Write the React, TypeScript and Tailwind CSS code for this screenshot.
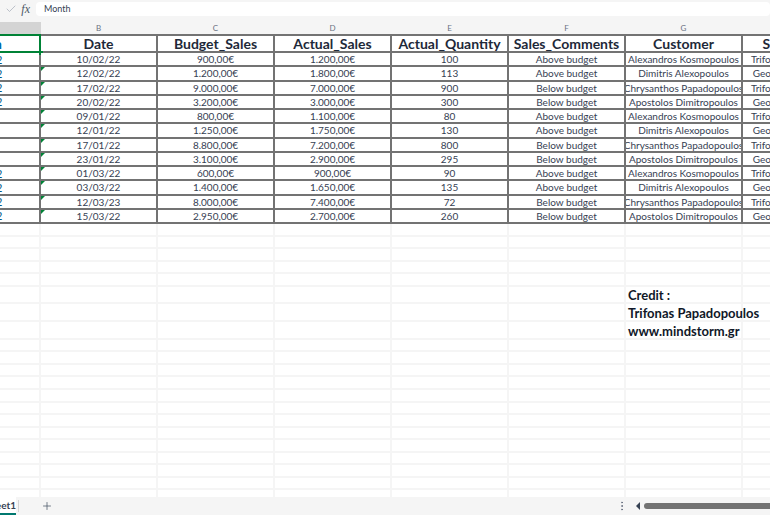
import { Check, MoreVertical, Plus } from "lucide-react";

const font = { fontFamily: "Lato, 'Open Sans', sans-serif" };

const customers = ["Alexandros Kosmopoulos", "Dimitris Alexopoulos", "Chrysanthos Papadopoulos", "Apostolos Dimitropoulos"];
const managers = ["Trifonas Papadopoulos", "Georgios Alexopoulos"];

const rows = [
  { a: "2", date: "10/02/22", budget: "900,00€", actual: "1.200,00€", qty: "100", note: "Above budget" },
  { a: "2", date: "12/02/22", budget: "1.200,00€", actual: "1.800,00€", qty: "113", note: "Above budget" },
  { a: "2", date: "17/02/22", budget: "9.000,00€", actual: "7.000,00€", qty: "900", note: "Below budget" },
  { a: "2", date: "20/02/22", budget: "3.200,00€", actual: "3.000,00€", qty: "300", note: "Below budget" },
  { a: "", date: "09/01/22", budget: "800,00€", actual: "1.100,00€", qty: "80", note: "Above budget" },
  { a: "", date: "12/01/22", budget: "1.250,00€", actual: "1.750,00€", qty: "130", note: "Above budget" },
  { a: "", date: "17/01/22", budget: "8.800,00€", actual: "7.200,00€", qty: "800", note: "Below budget" },
  { a: "", date: "23/01/22", budget: "3.100,00€", actual: "2.900,00€", qty: "295", note: "Below budget" },
  { a: "2", date: "01/03/22", budget: "600,00€", actual: "900,00€", qty: "90", note: "Above budget" },
  { a: "2", date: "03/03/22", budget: "1.400,00€", actual: "1.650,00€", qty: "135", note: "Above budget" },
  { a: "2", date: "12/03/23", budget: "8.000,00€", actual: "7.400,00€", qty: "72", note: "Below budget" },
  { a: "2", date: "15/03/22", budget: "2.950,00€", actual: "2.700,00€", qty: "260", note: "Below budget" },
];

const headers = ["Date", "Budget_Sales", "Actual_Sales", "Actual_Quantity", "Sales_Comments", "Customer", "Sales_Agent"];
const letters = ["B", "C", "D", "E", "F", "G", "H"];
const cols = "grid grid-cols-[39px_repeat(7,115px)] gap-x-0.5";

function Cell({ children }: { children?: React.ReactNode }) {
  return (
    <div className="flex items-center justify-center overflow-hidden whitespace-nowrap bg-white text-[10px] leading-none text-gray-700">
      {children}
    </div>
  );
}

// blank sheet rows under the table, the credit sits in column G
const blanks = [
  ...Array(5).fill({ size: "flex-1" }),
  { size: "flex-[1.5]", credit: "Credit :" },
  { size: "flex-[1.5]", credit: "Trifonas Papadopoulos" },
  { size: "flex-[1.5]", credit: "www.mindstorm.gr" },
  ...Array(12).fill({ size: "flex-1" }),
  { size: "flex-[0.65]", last: true },
];

export default function App() {
  return (
    <div className="flex h-screen w-full flex-col overflow-hidden bg-white" style={font}>
      {/* formula bar */}
      <div className="flex h-[22px] items-start gap-1 bg-neutral-100 pt-0.5">
        <div className="flex h-3.5 w-8 items-center justify-end gap-1 pr-0.5">
          <Check className="size-3 text-gray-400" strokeWidth={1.25} />
          <span className="text-xs leading-none text-gray-600 italic" style={{ fontFamily: "'Liberation Serif', serif" }}>
            fx
          </span>
        </div>
        <div className="flex h-3.5 flex-1 items-center rounded-sm bg-white pl-2 text-[9px] text-gray-700">Month</div>
      </div>

      {/* column letters */}
      <div className={`${cols} h-3 bg-neutral-100 text-[8px] leading-none text-gray-500`}>
        <div className="-mr-0.5 bg-neutral-300" />
        {letters.map((l) => (
          <div key={l} className="flex items-center justify-center">
            {l}
          </div>
        ))}
      </div>

      {/* table */}
      <div className={`${cols} h-[190px] shrink-0 grid-rows-[15px_repeat(12,1fr)] gap-y-0.5 bg-neutral-500 py-0.5`}>
        <div className="relative flex items-center overflow-visible bg-white text-sm font-bold text-sky-700">
          <span className="-ml-1.5">h</span>
          <div className="absolute -top-0.5 -right-0.5 -bottom-0.5 left-0 border-y-2 border-r-2 border-green-700" />
          <div className="absolute -right-1 -bottom-1 size-1 bg-green-700" />
        </div>
        {headers.map((h) => (
          <div key={h} className="flex items-center justify-center overflow-hidden whitespace-nowrap bg-white text-sm leading-none font-bold text-gray-800">
            {h}
          </div>
        ))}
        {rows.map((r, i) => (
          <div key={r.date} className="contents">
            <Cell>
              <span className="mr-auto -ml-1 text-[11px] text-sky-800">{r.a}</span>
            </Cell>
            <div className="relative flex items-center justify-center overflow-visible bg-white text-[10px] leading-none text-gray-700">
              {r.date}
              {i > 0 && <div className="absolute top-0 left-0 border-t-4 border-r-4 border-t-green-700 border-r-transparent" />}
            </div>
            <Cell>{r.budget}</Cell>
            <Cell>{r.actual}</Cell>
            <Cell>{r.qty}</Cell>
            <Cell>{r.note}</Cell>
            <Cell>{customers[i % 4]}</Cell>
            <Cell>{managers[i % 2]}</Cell>
          </div>
        ))}
      </div>

      {/* empty rows */}
      <div className="flex flex-1 flex-col">
        {blanks.map((b, i) => (
          <div key={i} className={`${cols} ${b.size} ${b.last ? "" : "border-b-2 border-neutral-100"}`}>
            {Array.from({ length: 8 }).map((_, c) => (
              <div key={c} className="relative">
                <div className="absolute top-0 -right-0.5 bottom-0 w-0.5 bg-neutral-100" />
                {c === 6 && b.credit && (
                  <span className="absolute top-0.5 bottom-0 left-0.5 flex items-center text-[13px] leading-none font-bold whitespace-nowrap text-gray-900">
                    {b.credit}
                  </span>
                )}
              </div>
            ))}
          </div>
        ))}
      </div>

      {/* sheet tabs and scroll bar */}
      <div className="flex h-4.5 shrink-0 items-center bg-neutral-100">
        <div className="flex h-full w-4 items-center justify-end overflow-hidden border-b-2 border-teal-700 bg-white text-[10px] font-bold text-gray-700">
          Sheet1
        </div>
        <div className="ml-0.5 h-3 w-px bg-neutral-300" />
        <Plus className="ml-5.5 size-3 text-gray-600" strokeWidth={1.5} />
        <div className="flex-1" />
        <MoreVertical className="size-3 text-gray-500" strokeWidth={2} />
        <div className="ml-2 size-0 border-y-4 border-r-4 border-y-transparent border-r-gray-700" />
        <div className="-mr-0.5 ml-1 h-1.5 w-32 rounded-l-full bg-neutral-500" />
      </div>
    </div>
  );
}
